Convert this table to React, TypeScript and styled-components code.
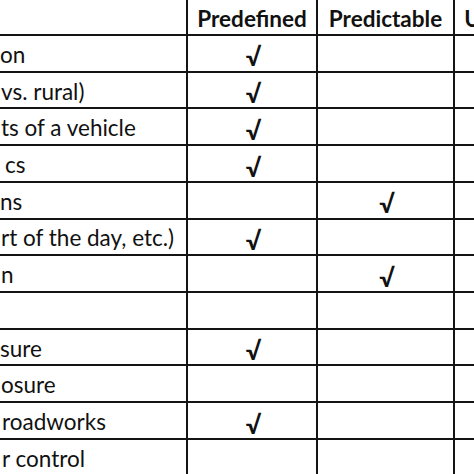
import styled, { createGlobalStyle } from "styled-components";

const GlobalStyle = createGlobalStyle`
  html, body {
    margin: 0;
    padding: 0;
    background: #ffffff;
    overflow: hidden;
  }
  body {
    width: 474px;
    height: 474px;
  }
`;

const Sheet = styled.div`
  display: grid;
  grid-template-columns: 186px 128px 135px 160px;
  grid-template-rows: 34px repeat(12, 34.73px);
  gap: 2px;
  background: #141414;
  width: max-content;
  font-family: Lato, "Liberation Sans", sans-serif;
  color: #111111;
`;

const Cell = styled.div`
  background: #ffffff;
  display: flex;
  align-items: center;
  overflow: hidden;
  white-space: nowrap;
`;

const HeadCell = styled(Cell)`
  justify-content: center;
  padding-top: 2px;
  font-size: 22.5px;
  font-weight: 700;
`;

const FactorCell = styled(Cell)<{ $indent: number }>`
  padding-left: ${(p) => p.$indent}px;
  font-size: 22.5px;
  padding-top: 2px;
`;

const MarkCell = styled(Cell)`
  justify-content: center;
  font-size: 25px;
  font-weight: 700;
  padding-top: 6px;
  padding-left: 3px;
`;

interface IRow {
  label: string;
  indent: number;
  mark: "" | "predefined" | "predictable";
}

const rows: IRow[] = [
  { label: "on", indent: 0, mark: "predefined" },
  { label: "vs. rural)", indent: 1, mark: "predefined" },
  { label: "ts of a vehicle", indent: 1, mark: "predefined" },
  { label: "cs", indent: 5, mark: "predefined" },
  { label: "ns", indent: 0, mark: "predictable" },
  { label: "rt of the day, etc.)", indent: 1, mark: "predefined" },
  { label: "n", indent: 1, mark: "predictable" },
  { label: "", indent: 0, mark: "" },
  { label: "sure", indent: 0, mark: "predefined" },
  { label: "osure", indent: 1, mark: "" },
  { label: "roadworks", indent: 2, mark: "predefined" },
  { label: "r control", indent: 2, mark: "" },
];

function App() {
  return (
    <>
      <GlobalStyle />
      <Sheet>
        <HeadCell />
        <HeadCell>Predefined</HeadCell>
        <HeadCell>Predictable</HeadCell>
        <HeadCell>Unpredictable</HeadCell>
        {rows.map((row, i) => (
          <>
            <FactorCell key={`f${i}`} $indent={row.indent}>
              {row.label}
            </FactorCell>
            <MarkCell key={`a${i}`}>{row.mark === "predefined" ? "√" : ""}</MarkCell>
            <MarkCell key={`b${i}`}>{row.mark === "predictable" ? "√" : ""}</MarkCell>
            <MarkCell key={`c${i}`} />
          </>
        ))}
      </Sheet>
    </>
  );
}

export default App;
